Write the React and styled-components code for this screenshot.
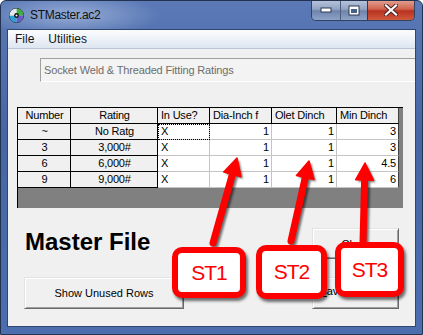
import React from "react";
import styled, { createGlobalStyle } from "styled-components";

const GlobalStyle = createGlobalStyle`
  html, body {
    margin: 0;
    padding: 0;
  }
  body {
    width: 423px;
    height: 335px;
    overflow: hidden;
    background: #ffffff;
    font-family: "Liberation Sans", Arial, sans-serif;
  }
`;

const columns = [
  { key: "number", label: "Number", width: 53, headAlign: "center", align: "center", fixed: true },
  { key: "rating", label: "Rating", width: 87, headAlign: "center", align: "center", fixed: true },
  { key: "inUse", label: "In Use?", width: 52, headAlign: "left", align: "left" },
  { key: "dia", label: "Dia-Inch f", width: 62, headAlign: "left", align: "right" },
  { key: "olet", label: "Olet Dinch", width: 65, headAlign: "left", align: "right" },
  { key: "min", label: "Min Dinch", width: 62, headAlign: "left", align: "right" },
];

const rows = [
  { number: "~", rating: "No Ratg", inUse: "X", dia: "1", olet: "1", min: "3" },
  { number: "3", rating: "3,000#", inUse: "X", dia: "1", olet: "1", min: "3" },
  { number: "6", rating: "6,000#", inUse: "X", dia: "1", olet: "1", min: "4.5" },
  { number: "9", rating: "9,000#", inUse: "X", dia: "1", olet: "1", min: "6" },
];

// annotation arrows drawn over the window
const arrows = [
  { x1: 212, y1: 242, x2: 236, y2: 157 },
  { x1: 290, y1: 240, x2: 308, y2: 160 },
  { x1: 362, y1: 242, x2: 364, y2: 162 },
];

const callouts = [
  { label: "ST1", left: 172, top: 247, w: 74, h: 51 },
  { label: "ST2", left: 256, top: 245, w: 71, h: 54 },
  { label: "ST3", left: 335, top: 242, w: 69, h: 55 },
];

const arrowGeometry = ({ x1, y1, x2, y2 }) => {
  const len = 17;
  const half = 9;
  const dx = x2 - x1;
  const dy = y2 - y1;
  const d = Math.hypot(dx, dy);
  const ux = dx / d;
  const uy = dy / d;
  const bx = x2 - ux * len;
  const by = y2 - uy * len;
  const nx = -uy;
  const ny = ux;
  const head = `${x2},${y2} ${bx + nx * half},${by + ny * half} ${bx - nx * half},${by - ny * half}`;
  return { head, bx: bx + ux * 2, by: by + uy * 2 };
};

const DiscIcon = () => (
  <svg width="15" height="15" viewBox="0 0 15 15">
    <circle cx="7.5" cy="7.5" r="7" fill="#c8c8d0" stroke="#222" strokeWidth="1" />
    <path d="M7.5 7.5 L7.5 0.5 A7 7 0 0 1 14.5 7.5 Z" fill="#3cb43c" />
    <path d="M7.5 7.5 L14.5 7.5 A7 7 0 0 1 7.5 14.5 Z" fill="#6a5acd" />
    <path d="M7.5 7.5 L7.5 14.5 A7 7 0 0 1 0.5 7.5 Z" fill="#2ea0d8" />
    <path d="M7.5 7.5 L0.5 7.5 A7 7 0 0 1 7.5 0.5 Z" fill="#e8e8ee" />
    <circle cx="7.5" cy="7.5" r="2.4" fill="#111" />
    <circle cx="7.5" cy="7.5" r="1" fill="#fff" />
  </svg>
);

export default function App() {
  return (
    <>
      <GlobalStyle />
      <Window>
        <TitleBar>
          <DiscIcon />
          <Title>STMaster.ac2</Title>
          <CaptionButtons>
            <CaptionButton $w={28}>
              <svg width="12" height="6" viewBox="0 0 12 6">
                <rect x="1" y="1" width="10" height="4" fill="#fff" stroke="#2d3a52" strokeWidth="1" />
              </svg>
            </CaptionButton>
            <CaptionButton $w={27}>
              <svg width="12" height="11" viewBox="0 0 12 11">
                <rect x="1" y="1" width="10" height="9" fill="#fff" stroke="#2d3a52" strokeWidth="1" />
                <rect x="3" y="4" width="6" height="4" fill="#4a5f86" />
              </svg>
            </CaptionButton>
            <CaptionButton $w={47} $close>
              <svg width="14" height="12" viewBox="0 0 14 12">
                <path d="M2 1.5 L12 10.5 M12 1.5 L2 10.5" stroke="#4a2020" strokeWidth="4" strokeLinecap="square" />
                <path d="M2 1.5 L12 10.5 M12 1.5 L2 10.5" stroke="#fff" strokeWidth="2.2" strokeLinecap="square" />
              </svg>
            </CaptionButton>
          </CaptionButtons>
        </TitleBar>

        <Frame>
          <Client>
            <MenuBar>
              <MenuItem>File</MenuItem>
              <MenuItem>Utilities</MenuItem>
            </MenuBar>

            <Content>
              <TitleBox>Socket Weld &amp; Threaded Fitting Ratings</TitleBox>

              <Grid>
                <Row>
                  {columns.map((c) => (
                    <Cell key={c.key} $fixed $align={c.headAlign}>
                      {c.label}
                    </Cell>
                  ))}
                </Row>
                {rows.map((r, i) => (
                  <Row key={i}>
                    {columns.map((c) => (
                      <Cell
                        key={c.key}
                        $fixed={c.fixed}
                        $align={c.align}
                        $focus={i === 0 && c.key === "inUse"}
                      >
                        {r[c.key]}
                      </Cell>
                    ))}
                  </Row>
                ))}
              </Grid>

              <Bottom>
                <LeftCol>
                  <Heading>Master File</Heading>
                  <Button $w={160} $h={32} $mt={23}>
                    Show Unused Rows
                  </Button>
                </LeftCol>
                <RightCol>
                  <Button $w={87} $h={31} $mt={20}>
                    Close
                  </Button>
                  <Button $w={87} $h={32} $mt={18} $lift={4}>
                    <u>S</u>ave Changes
                  </Button>
                </RightCol>
              </Bottom>
            </Content>
          </Client>
        </Frame>

        <Overlay width="423" height="335" viewBox="0 0 423 335">
          <defs>
            <filter id="blur" x="-20%" y="-20%" width="140%" height="140%">
              <feGaussianBlur stdDeviation="1.2" />
            </filter>
          </defs>
          {arrows.map((a, i) => {
            const g = arrowGeometry(a);
            return (
              <g key={i}>
                <g transform="translate(2,2)" filter="url(#blur)" opacity="0.55">
                  <line x1={a.x1} y1={a.y1} x2={g.bx} y2={g.by} stroke="#000" strokeWidth="7" strokeLinecap="round" />
                  <polygon points={g.head} fill="#000" />
                </g>
                <line x1={a.x1} y1={a.y1} x2={g.bx} y2={g.by} stroke="#ff0000" strokeWidth="7" strokeLinecap="round" />
                <polygon points={g.head} fill="#ff0000" stroke="#ff0000" strokeWidth="1.5" strokeLinejoin="round" />
              </g>
            );
          })}
        </Overlay>

        {callouts.map((c) => (
          <Callout key={c.label} $left={c.left} $top={c.top} $w={c.w} $h={c.h}>
            {c.label}
          </Callout>
        ))}
      </Window>
    </>
  );
}

// styling
const Window = styled.div`
  position: relative;
  width: 423px;
  height: 335px;
  box-sizing: border-box;
  display: flex;
  flex-direction: column;
  background: linear-gradient(180deg, #5a79b6 0%, #4565a4 40%, #4d6eae 100%);
  border: 1px solid #22324f;
  border-radius: 6px 6px 0 0;
  overflow: hidden;
`;

const TitleBar = styled.div`
  height: 28px;
  flex: none;
  display: flex;
  align-items: flex-start;
  padding-left: 8px;
  background: radial-gradient(ellipse 90px 22px at 70px 14px, rgba(200, 215, 240, 0.55), rgba(200, 215, 240, 0) 100%);

  > svg {
    margin-top: 7px;
  }
`;

const Title = styled.div`
  margin: 7px 0 0 6px;
  font-size: 12px;
  letter-spacing: -0.3px;
  color: #101010;
  line-height: 15px;
`;

const CaptionButtons = styled.div`
  margin-left: auto;
  margin-right: 7px;
  margin-top: -1px;
  display: flex;
  height: 20px;
  border: 1px solid #33435f;
  border-top: none;
  border-radius: 0 0 5px 5px;
  overflow: hidden;
`;

const CaptionButton = styled.div`
  width: ${(p) => p.$w}px;
  height: 100%;
  display: flex;
  align-items: center;
  justify-content: center;
  box-sizing: border-box;
  border-left: ${(p) => (p.$close ? "1px solid #5a2a28" : "1px solid #4c5d7c")};
  background: ${(p) =>
    p.$close
      ? "linear-gradient(180deg, #e4a396 0%, #d0644f 45%, #b8321f 55%, #cf5a3d 100%)"
      : "linear-gradient(180deg, #b9c6dc 0%, #93a5c5 45%, #6e84ab 55%, #8ea3c8 100%)"};

  &:first-child {
    border-left: none;
  }
`;

const Frame = styled.div`
  flex: 1;
  display: flex;
  padding: 0 6px 7px 6px;
  min-height: 0;
`;

const Client = styled.div`
  flex: 1;
  display: flex;
  flex-direction: column;
  border: 1px solid #2e4670;
  background: #f0f0f0;
  overflow: hidden;
`;

const MenuBar = styled.div`
  height: 18px;
  flex: none;
  display: flex;
  align-items: center;
  gap: 14px;
  padding-left: 7px;
  background: linear-gradient(180deg, #fbfcfe 0%, #eef2f8 50%, #dde5f1 100%);
  border-bottom: 1px solid #b9c4d6;
`;

const MenuItem = styled.span`
  font-size: 12px;
  color: #141414;
`;

const Content = styled.div`
  flex: 1;
  display: flex;
  flex-direction: column;
`;

const TitleBox = styled.div`
  margin: 9px -4px 0 32px;
  height: 24px;
  box-sizing: border-box;
  border-top: 1px solid #a0a0a0;
  border-left: 1px solid #a0a0a0;
  border-bottom: 1px solid #ffffff;
  background: #f3f3f3;
  color: #6d6d6d;
  font-size: 11px;
  letter-spacing: -0.15px;
  line-height: 22px;
  padding-left: 3px;
  white-space: nowrap;
`;

const Grid = styled.div`
  margin: 25px 0 0 9px;
  width: 386px;
  height: 101px;
  box-sizing: border-box;
  border-top: 1px solid #000;
  border-left: 1px solid #000;
  background: #808080;
`;

const Row = styled.div`
  display: grid;
  grid-template-columns: ${columns.map((c) => `${c.width}px`).join(" ")};
  height: 16px;
`;

const Cell = styled.div`
  box-sizing: border-box;
  height: 16px;
  padding: 0 2px 0 3px;
  font-size: 11px;
  letter-spacing: -0.2px;
  line-height: 15px;
  color: #000;
  white-space: nowrap;
  overflow: hidden;
  text-align: ${(p) => p.$align};
  background: ${(p) => (p.$fixed ? "#f0f0f0" : "#ffffff")};
  border-right: 1px solid ${(p) => (p.$fixed ? "#000" : "#c4c4c4")};
  border-bottom: 1px solid ${(p) => (p.$fixed ? "#000" : "#c4c4c4")};
  outline: ${(p) => (p.$focus ? "1px dotted #000" : "none")};
  outline-offset: -1px;

  &:last-child {
    border-right-color: #404040;
  }
`;

const Bottom = styled.div`
  display: flex;
  justify-content: space-between;
  padding: 0 16px 0 16px;
`;

const LeftCol = styled.div`
  display: flex;
  flex-direction: column;
  align-items: flex-start;
`;

const RightCol = styled.div`
  display: flex;
  flex-direction: column;
`;

const Heading = styled.div`
  margin: 22px 0 0 1px;
  font-size: 24px;
  line-height: 24px;
  font-weight: bold;
  color: #000;
`;

const Button = styled.div`
  width: ${(p) => p.$w}px;
  height: ${(p) => p.$h}px;
  margin-top: ${(p) => p.$mt}px;
  padding-bottom: ${(p) => p.$lift || 0}px;
  box-sizing: border-box;
  display: flex;
  align-items: center;
  justify-content: center;
  font-size: 11px;
  color: #000;
  background: #f0f0f0;
  border: 1px solid;
  border-color: #e3e3e3 #696969 #696969 #e3e3e3;
  box-shadow: inset 1px 1px #ffffff, inset -1px -1px #a0a0a0;
`;

const Overlay = styled.svg`
  position: absolute;
  left: 0;
  top: 0;
  pointer-events: none;
`;

const Callout = styled.div`
  position: absolute;
  left: ${(p) => p.$left - 1}px;
  top: ${(p) => p.$top - 1}px;
  width: ${(p) => p.$w}px;
  height: ${(p) => p.$h}px;
  box-sizing: border-box;
  border: 6px solid #ff0000;
  border-radius: 10px;
  background: #ffffff;
  box-shadow: 2px 3px 3px rgba(0, 0, 0, 0.55);
  display: flex;
  align-items: center;
  justify-content: center;
  color: #ff0000;
  font-size: 21px;
  letter-spacing: -1px;
`;
